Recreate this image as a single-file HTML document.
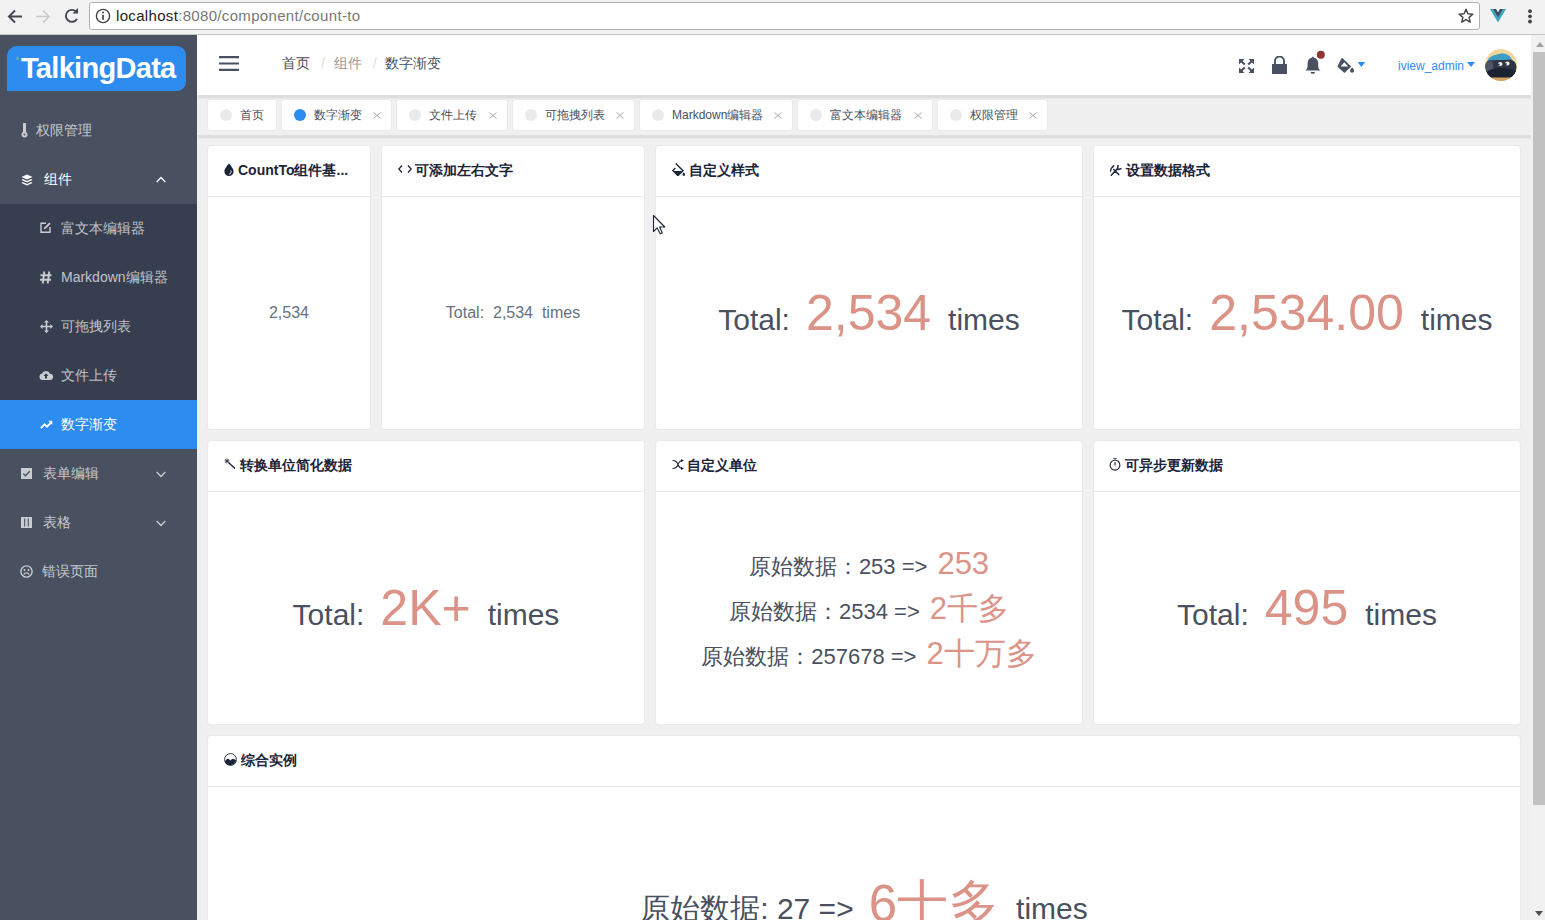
<!DOCTYPE html>
<html><head><meta charset="utf-8">
<style>
*{box-sizing:border-box;margin:0;padding:0}
html,body{width:1545px;height:920px;overflow:hidden;background:#f0f0f0;font-family:"Liberation Sans",sans-serif;}
.abs{position:absolute}
#chrome{position:absolute;left:0;top:0;width:1545px;height:35px;background:#f2f2f2;border-bottom:1px solid #c4c4c4}
#url{position:absolute;left:89px;top:2px;width:1391px;height:28px;background:#fff;border:1px solid #b0b0b0;border-radius:3px}
#urltext{position:absolute;left:116px;top:7px;font-size:15px;line-height:18px;color:#777;white-space:nowrap;letter-spacing:0.33px}
#urltext b{font-weight:normal;color:#222}
#side{position:absolute;left:0;top:35px;width:197px;height:885px;background:#495060}
#logo{position:absolute;left:7px;top:46px;width:179px;height:45px;background:#2d8cf0;border-radius:10px 9px 9px 0}
#logo span{position:absolute;left:14px;top:5px;font-size:29px;font-weight:bold;color:#fff;line-height:34px;letter-spacing:-0.7px}
.mi{position:absolute;left:0;width:197px;height:49px;color:rgba(255,255,255,.7);font-size:14px;line-height:49px;white-space:nowrap}
.mi .t{position:absolute;top:0}
.mi svg{position:absolute}
#sub{position:absolute;left:0;top:204px;width:197px;height:245px;background:#363e4f}
#header{position:absolute;left:197px;top:35px;width:1334px;height:60px;background:#fff}
#tagsbar{position:absolute;left:197px;top:95px;width:1334px;height:40px;background:#f0f0f0}
.shd{position:absolute;left:198px;width:1333px;height:4px;border-top:1px solid #e0e0e0;border-bottom:1px solid #e9e9e9;background:#dddddd}
.tag{position:absolute;top:99px;height:32px;background:#fff;border:1px solid #e9eaec;border-radius:3px;font-size:12px;line-height:28px;color:#495060;white-space:nowrap}
.tag .dot{position:absolute;left:12px;top:9px;width:12px;height:12px;border-radius:50%;background:#e9eaec}
.tag .tt{position:absolute;left:32px;top:1px}
.tag .x{position:absolute;top:12px}
.card{position:absolute;background:#fff;border:1px solid #e9eaec;border-radius:4px}
.card .hd{position:absolute;left:0;top:0;right:0;height:51px;border-bottom:1px solid #e9eaec}
.card .ttl{position:absolute;left:29px;top:14px;font-size:14px;font-weight:bold;color:#1c2438;line-height:20px;white-space:nowrap}
.card .ic{position:absolute;top:17px;left:15px}
.gray{color:#657180}
.dk{color:#495060}
.sal{color:#dc9387}
.ln{position:absolute;white-space:nowrap;left:0;right:0;text-align:center}
#sb{position:absolute;left:1531px;top:35px;width:14px;height:885px;background:#f1f1f1}
#thumb{position:absolute;left:1533px;top:52px;width:12px;height:753px;background:#c1c1c1}
</style></head>
<body>
<div id="chrome">
  <svg class="abs" style="left:7px;top:9px" width="16" height="15" viewBox="0 0 16 15"><path d="M15 7.5H2M8 1.5L2 7.5l6 6" fill="none" stroke="#454750" stroke-width="2"/></svg>
  <svg class="abs" style="left:36px;top:9px" width="15" height="15" viewBox="0 0 15 15"><path d="M0 7.5h13M7 1.5l6 6-6 6" fill="none" stroke="#c9c9cc" stroke-width="1.6"/></svg>
  <svg class="abs" style="left:63px;top:8px" width="17" height="16" viewBox="0 0 17 16"><path d="M13.6 4.2A6 6 0 1 0 14 11" fill="none" stroke="#454750" stroke-width="1.9"/><path d="M9.5 5.5h5.5V0z" fill="#454750"/></svg>
  <div id="url"></div>
  <svg class="abs" style="left:95px;top:8px" width="16" height="16" viewBox="0 0 16 16"><circle cx="8" cy="8" r="6.6" fill="none" stroke="#444" stroke-width="1.4"/><rect x="7.2" y="6.8" width="1.7" height="5" fill="#444"/><circle cx="8.05" cy="4.6" r="1" fill="#444"/></svg>
  <div id="urltext"><b>localhost</b>:8080/component/count-to</div>
  <svg class="abs" style="left:1458px;top:8px" width="16" height="16" viewBox="0 0 16 16"><path d="M8 1.2l1.9 4.6 4.9.4-3.7 3.2 1.1 4.8L8 11.6l-4.2 2.6 1.1-4.8L1.2 6.2l4.9-.4z" fill="none" stroke="#444" stroke-width="1.4" stroke-linejoin="round"/></svg>
  <svg class="abs" style="left:1490px;top:9px" width="16" height="14" viewBox="0 0 18 16" preserveAspectRatio="none"><path d="M0 0h4.5L9 8l4.5-8H18L9 15.5z" fill="#41a3c0"/><path d="M3.6 0h3.2L9 4l2.2-4h3.2L9 9.5z" fill="#3b4a5e"/></svg>
  <svg class="abs" style="left:1527px;top:8px" width="6" height="18" viewBox="0 0 6 18"><circle cx="3" cy="3.2" r="1.9" fill="#444"/><circle cx="3" cy="8.3" r="1.9" fill="#444"/><circle cx="3" cy="13.5" r="1.9" fill="#444"/></svg>
</div>

<div id="side">
</div>
<div id="sub"></div>
<div class="mi" style="top:106px"><svg style="left:21px;top:17px" width="7" height="15" viewBox="0 0 7 15"><path d="M2 1.2a1.5 1.5 0 0 1 3 0V9a3 3 0 1 1-3 0z" fill="#c9ccd1"/><circle cx="3.5" cy="11.5" r="1" fill="#495060"/></svg><span class="t" style="left:36px">权限管理</span></div>
<div class="mi" style="top:155px;color:#fff"><svg style="left:21px;top:19px" width="12" height="12" viewBox="0 0 12 12"><path d="M6 0.5L11.5 3 6 5.5 0.5 3z" fill="#fff"/><path d="M1.8 5L0.5 6 6 8.5 11.5 6 10.2 5 6 7z" fill="#fff"/><path d="M1.8 8L0.5 9 6 11.5 11.5 9 10.2 8 6 10z" fill="#fff"/></svg><span class="t" style="left:44px">组件</span><svg style="left:156px;top:21px" width="10" height="7" viewBox="0 0 10 7"><path d="M0.7 6L5 1.5 9.3 6" fill="none" stroke="#fff" stroke-width="1.3"/></svg></div>
<div class="mi" style="top:204px"><svg style="left:40px;top:18px" width="11" height="11" viewBox="0 0 11 11"><path d="M6 1.2H1v9h9V5" fill="none" stroke="#c9ccd1" stroke-width="1.4"/><path d="M9.3 0.4l1.3 1.3-5 5-1.8.5.5-1.8z" fill="#c9ccd1"/></svg><span class="t" style="left:61px">富文本编辑器</span></div>
<div class="mi" style="top:253px"><svg style="left:40px;top:18px" width="12" height="13" viewBox="0 0 12 13"><path d="M4.3 0.5L2.7 12.5M9.3 0.5L7.7 12.5M0.5 4.3h11M0 8.7h11" fill="none" stroke="#c9ccd1" stroke-width="1.9"/></svg><span class="t" style="left:61px">Markdown编辑器</span></div>
<div class="mi" style="top:302px"><svg style="left:40px;top:18px" width="13" height="13" viewBox="0 0 13 13"><path d="M6.5 1.5v10M1.5 6.5h10" stroke="#c9ccd1" stroke-width="1.6"/><path d="M6.5 0L9 2.6H4zM6.5 13L9 10.4H4zM0 6.5L2.6 4v5zM13 6.5L10.4 4v5z" fill="#c9ccd1"/></svg><span class="t" style="left:61px">可拖拽列表</span></div>
<div class="mi" style="top:351px"><svg style="left:39px;top:19px" width="14" height="10" viewBox="0 0 14 10"><path d="M3.5 10A3.3 3.3 0 0 1 3 3.5 4.3 4.3 0 0 1 11 3.8 3.1 3.1 0 0 1 11 10z" fill="#c9ccd1"/><path d="M7 3.3L9.6 6H8v2.5H6V6H4.4z" fill="#363e4f"/></svg><span class="t" style="left:61px">文件上传</span></div>
<div class="mi" style="top:400px;background:#2d8cf0;color:#fff"><svg style="left:40px;top:20px" width="13" height="9" viewBox="0 0 13 9"><path d="M0.8 8.2L4.6 4.3 7 6.7 11 2.6" fill="none" stroke="#fff" stroke-width="1.8"/><path d="M8.3 0.8h4v4z" fill="#fff"/></svg><span class="t" style="left:61px">数字渐变</span></div>
<div class="mi" style="top:449px"><svg style="left:21px;top:19px" width="11" height="11" viewBox="0 0 11 11"><rect width="11" height="11" fill="#c9ccd1"/><path d="M2.2 5.6l2.2 2.2 4.4-4.6" fill="none" stroke="#495060" stroke-width="1.3"/></svg><span class="t" style="left:43px">表单编辑</span><svg style="left:156px;top:22px" width="10" height="7" viewBox="0 0 10 7"><path d="M0.7 1L5 5.5 9.3 1" fill="none" stroke="#c9ccd1" stroke-width="1.3"/></svg></div>
<div class="mi" style="top:498px"><svg style="left:21px;top:19px" width="11" height="11" viewBox="0 0 11 11"><rect width="11" height="11" fill="#c9ccd1"/><path d="M3.7 1.5v8M7.3 1.5v8" stroke="#495060" stroke-width="1.1"/></svg><span class="t" style="left:43px">表格</span><svg style="left:156px;top:22px" width="10" height="7" viewBox="0 0 10 7"><path d="M0.7 1L5 5.5 9.3 1" fill="none" stroke="#c9ccd1" stroke-width="1.3"/></svg></div>
<div class="mi" style="top:547px"><svg style="left:20px;top:18px" width="13" height="13" viewBox="0 0 13 13"><circle cx="6.5" cy="6.5" r="5.6" fill="none" stroke="#c9ccd1" stroke-width="1.4"/><circle cx="4.5" cy="5" r="1" fill="#c9ccd1"/><circle cx="8.5" cy="5" r="1" fill="#c9ccd1"/><path d="M3.8 9.6a3 3 0 0 1 5.4 0" fill="none" stroke="#c9ccd1" stroke-width="1.2"/></svg><span class="t" style="left:42px">错误页面</span></div>
<div id="logo"><span>TalkingData</span><i style="position:absolute;left:9px;top:11px;width:3px;height:3px;background:#5aa7b8"></i></div>

<div id="header"></div>
<svg class="abs" style="left:219px;top:56px" width="20" height="15" viewBox="0 0 20 15"><path d="M0 1.2h20M0 7.5h20M0 13.8h20" stroke="#495060" stroke-width="2.2"/></svg>
<div class="abs" style="left:282px;top:53px;font-size:14px;line-height:20px;white-space:nowrap;color:#495060"><span style="color:#495060">首页</span><span style="position:absolute;left:39px;color:#dddee1">/</span><span style="position:absolute;left:52px;color:#999">组件</span><span style="position:absolute;left:91px;color:#dddee1">/</span><span style="position:absolute;left:103px;font-weight:500;color:#495060">数字渐变</span></div>
<svg class="abs" style="left:1239px;top:59px" width="15" height="14" viewBox="0 0 15 14"><g fill="#495060"><path d="M0 0h5.5L0 5.5z"/><path d="M15 0v5.5L9.5 0z"/><path d="M0 14v-5.5L5.5 14z"/><path d="M15 14h-5.5L15 8.5z"/></g><path d="M2 2l3.8 3.6M13 2L9.2 5.6M2 12l3.8-3.6M13 12L9.2 8.4" stroke="#495060" stroke-width="2"/></svg>
<svg class="abs" style="left:1271px;top:56px" width="17" height="19" viewBox="0 0 17 19"><path d="M4 8.5V5a4.5 4.5 0 0 1 9 0v3.5" fill="none" stroke="#495060" stroke-width="1.9"/><rect x="1" y="8" width="15" height="10" fill="#495060"/></svg>
<svg class="abs" style="left:1300px;top:48px" width="70" height="30" viewBox="0 0 70 30"><path d="M12.8 8.6c.5 0 .8.4.8.9 3 .6 4.6 2.8 4.6 5.8v2.2c0 2.6.8 4.2 2.4 5.1H5.2c1.6-.9 2.4-2.5 2.4-5.1v-2.2c0-3 1.6-5.2 4.6-5.8 0-.5.3-.9.6-.9z" fill="#495060"/><path d="M10.6 23.9h4.4a2.2 1.9 0 0 1-4.4 0z" fill="#495060"/><circle cx="20.8" cy="6.8" r="4" fill="#8d3632"/><path d="M41.3 10.6L42.4 10 51.2 18.6 44.4 25 37.4 18.6z" fill="#495060"/><path d="M40.6 18.6L44.3 14.2 48.1 18.6z" fill="#fff"/><path d="M52.1 19.2c.9 1.3 2 2.4 2 3.5a2 2 0 0 1-4 0c0-1.1 1.1-2.2 2-3.5z" fill="#495060"/><path d="M57.7 14h7.5L61.45 19z" fill="#2d8cf0"/></svg>
<div class="abs" style="left:1398px;top:58px;font-size:12px;line-height:16px;color:#2d8cf0;white-space:nowrap">iview_admin</div>
<svg class="abs" style="left:1467px;top:62px" width="8" height="5" viewBox="0 0 8 5"><path d="M0 0h8L4 5z" fill="#2d8cf0"/></svg>
<svg class="abs" style="left:1481px;top:45px" width="40" height="40" viewBox="0 0 40 40"><defs><clipPath id="av"><circle cx="20" cy="20" r="16"/></clipPath></defs><g clip-path="url(#av)"><rect width="40" height="40" fill="#f1d69c"/><path d="M6 17L8 13 12 10.5 16 9.5 21 8.3 25 9 28.5 11 31 14.5 32 17 20 18z" fill="#3d9dc2"/><path d="M4.5 19Q6 15 10 15.2L30 14.8Q35 16 35.5 22L35 30Q28 33.5 20 33.5Q11 33.5 5 30Q3.5 24 4.5 19z" fill="#2e3545"/><path d="M5 18Q7 16 11 16L13 24 6 28Q4 23 5 18z" fill="#4d5666"/><path d="M5.5 27Q12 22.5 20 23Q28 22.5 35 26L35 31Q27 34 20 34Q11 34 5.5 31z" fill="#1b2232"/><ellipse cx="19.2" cy="19" rx="2.3" ry="2" fill="#eeeeee"/><ellipse cx="26.3" cy="18.6" rx="2.3" ry="2" fill="#eeeeee"/><circle cx="17.8" cy="19.3" r="0.9" fill="#222"/><circle cx="24.9" cy="19" r="0.9" fill="#222"/><path d="M9 32.5L31 32.5 30 36Q20 38 10 36z" fill="#d6a35f"/></g></svg>
<div id="tagsbar"></div>
<div class="shd" style="top:95px"></div>
<div class="shd" style="top:135px"></div>
<div class="tag" style="left:207px;width:70px"><span class="dot"></span><span class="tt">首页</span></div>
<div class="tag" style="left:281px;width:111px"><span class="dot" style="background:#2d8cf0"></span><span class="tt">数字渐变</span><svg class="x" style="left:91px" width="8" height="7" viewBox="0 0 8 7"><path d="M0.5 0.5l7 6M7.5 0.5l-7 6" stroke="#a3a8b0" stroke-width="1"/></svg></div>
<div class="tag" style="left:396px;width:112px"><span class="dot"></span><span class="tt">文件上传</span><svg class="x" style="left:92px" width="8" height="7" viewBox="0 0 8 7"><path d="M0.5 0.5l7 6M7.5 0.5l-7 6" stroke="#a3a8b0" stroke-width="1"/></svg></div>
<div class="tag" style="left:512px;width:123px"><span class="dot"></span><span class="tt">可拖拽列表</span><svg class="x" style="left:103px" width="8" height="7" viewBox="0 0 8 7"><path d="M0.5 0.5l7 6M7.5 0.5l-7 6" stroke="#a3a8b0" stroke-width="1"/></svg></div>
<div class="tag" style="left:639px;width:154px"><span class="dot"></span><span class="tt">Markdown编辑器</span><svg class="x" style="left:134px" width="8" height="7" viewBox="0 0 8 7"><path d="M0.5 0.5l7 6M7.5 0.5l-7 6" stroke="#a3a8b0" stroke-width="1"/></svg></div>
<div class="tag" style="left:797px;width:136px"><span class="dot"></span><span class="tt">富文本编辑器</span><svg class="x" style="left:116px" width="8" height="7" viewBox="0 0 8 7"><path d="M0.5 0.5l7 6M7.5 0.5l-7 6" stroke="#a3a8b0" stroke-width="1"/></svg></div>
<div class="tag" style="left:937px;width:111px"><span class="dot"></span><span class="tt">权限管理</span><svg class="x" style="left:91px" width="8" height="7" viewBox="0 0 8 7"><path d="M0.5 0.5l7 6M7.5 0.5l-7 6" stroke="#a3a8b0" stroke-width="1"/></svg></div>


<div class="card" style="left:207px;top:145px;width:164px;height:285px"><div class="hd"></div>
<svg class="ic" style="left:16px;top:17px" width="10" height="13" viewBox="0 0 10 13"><path d="M5 0.3C6.5 2.6 9.6 5.7 9.6 8.4A4.6 4.6 0 0 1 0.4 8.4C0.4 5.7 3.5 2.6 5 0.3z" fill="#1c2438"/><path d="M6.8 7.4c.8 1.6.1 3.4-1.6 3.8" fill="none" stroke="#fff" stroke-width=".9"/></svg>
<div class="ttl" style="left:30px">CountTo组件基...</div>
<div class="ln gray" style="top:157px;font-size:16px;line-height:20px">2,534</div>
</div>

<div class="card" style="left:381px;top:145px;width:264px;height:285px"><div class="hd"></div>
<svg class="ic" style="left:16px;top:19px" width="14" height="8" viewBox="0 0 14 8"><path d="M4 0.5L0.8 4 4 7.5M10 0.5L13.2 4 10 7.5" fill="none" stroke="#1c2438" stroke-width="1.3"/></svg>
<div class="ttl" style="left:33px">可添加左右文字</div>
<div class="ln gray" style="top:157px;font-size:16px;line-height:20px">Total:&nbsp; 2,534 &nbsp;times</div>
</div>

<div class="card" style="left:655px;top:145px;width:428px;height:285px"><div class="hd"></div>
<svg class="ic" style="left:16px;top:17px" width="14" height="13" viewBox="0 0 14 13"><path d="M3.8 0.6L11 7.8 5.9 12.6 0.8 7.6 3.4 5" fill="none" stroke="#1c2438" stroke-width="1.4"/><path d="M1.6 8h8.8L5.9 12.4z" fill="#1c2438"/><path d="M11.8 9.2c.8 1 1.3 1.8 1.3 2.4a1.3 1.3 0 0 1-2.6 0c0-.6.5-1.4 1.3-2.4z" fill="#1c2438"/></svg>
<div class="ttl" style="left:33px">自定义样式</div>
<div class="ln dk" style="top:142px;font-size:30px;line-height:50px"><span>Total:</span><span class="sal" style="font-size:50px;margin-left:16px">2,534</span><span style="margin-left:17px">times</span></div>
</div>

<div class="card" style="left:1093px;top:145px;width:428px;height:285px"><div class="hd"></div>
<svg class="ic" style="left:16px;top:19px" width="12" height="11" viewBox="0 0 12 11"><path d="M1.3 10.2L7.6 3.6M8.1 0.4Q7.4 3 7.6 4.4Q9.2 4.3 10.9 3.7M8.7 9.6L3.8 4.6M0.4 6Q1.2 2.6 3.6 0.8" fill="none" stroke="#1c2438" stroke-width="1.5" stroke-linecap="round"/></svg>
<div class="ttl" style="left:32px">设置数据格式</div>
<div class="ln dk" style="top:142px;font-size:30px;line-height:50px"><span>Total:</span><span class="sal" style="font-size:50px;margin-left:16px">2,534.00</span><span style="margin-left:17px">times</span></div>
</div>

<div class="card" style="left:207px;top:440px;width:438px;height:285px"><div class="hd"></div>
<svg class="ic" style="left:16px;top:17px" width="12" height="11" viewBox="0 0 12 11"><path d="M4.5 4.5L11 10.5" stroke="#1c2438" stroke-width="1.4"/><path d="M3 0.5v5M0.5 3h5M1.2 1.2l3.6 3.6M4.8 1.2L1.2 4.8" stroke="#1c2438" stroke-width=".8"/></svg>
<div class="ttl" style="left:32px">转换单位简化数据</div>
<div class="ln dk" style="top:142px;font-size:30px;line-height:50px"><span>Total:</span><span class="sal" style="font-size:50px;margin-left:16px">2K+</span><span style="margin-left:17px">times</span></div>
</div>

<div class="card" style="left:655px;top:440px;width:428px;height:285px"><div class="hd"></div>
<svg class="ic" style="left:16px;top:18px" width="12" height="11" viewBox="0 0 12 11"><path d="M0.5 1.5c3 0 4.5 1 5.5 4s2.5 4 5 4M0.5 9.5c3 0 4.5-1 5.5-4s2.5-4 5-4" fill="none" stroke="#1c2438" stroke-width="1.1"/><path d="M9 0L12 1.5 9 3zM9 8L12 9.5 9 11z" fill="#1c2438"/></svg>
<div class="ttl" style="left:31px">自定义单位</div>
<div class="ln dk" style="top:100px;font-size:22px;line-height:45px">原始数据：253 =&gt;<span class="sal" style="font-size:31px;margin-left:10px">253</span></div>
<div class="ln dk" style="top:145px;font-size:22px;line-height:45px">原始数据：2534 =&gt;<span class="sal" style="font-size:31px;margin-left:10px">2千多</span></div>
<div class="ln dk" style="top:190px;font-size:22px;line-height:45px">原始数据：257678 =&gt;<span class="sal" style="font-size:31px;margin-left:10px">2十万多</span></div>
</div>

<div class="card" style="left:1093px;top:440px;width:428px;height:285px"><div class="hd"></div>
<svg class="ic" style="left:15px;top:17px" width="12" height="13" viewBox="0 0 12 13"><circle cx="6" cy="7.2" r="4.9" fill="none" stroke="#1c2438" stroke-width="1.1"/><path d="M6 4v3.5M4.3 0.8h3.4M10 2.8l-.9.9" stroke="#1c2438" stroke-width="1.1"/></svg>
<div class="ttl" style="left:31px">可异步更新数据</div>
<div class="ln dk" style="top:142px;font-size:30px;line-height:50px"><span>Total:</span><span class="sal" style="font-size:50px;margin-left:16px">495</span><span style="margin-left:17px">times</span></div>
</div>

<div class="card" style="left:207px;top:735px;width:1314px;height:302px"><div class="hd"></div>
<svg class="ic" style="left:16px;top:17px" width="13" height="13" viewBox="0 0 13 13"><circle cx="6.5" cy="6.5" r="5.9" fill="none" stroke="#1c2438" stroke-width=".9"/><path d="M0.8 8.6Q2.5 5.2 4.8 5.9Q5.8 6.4 6.6 7.6Q7.6 5.6 9.5 5.9Q11 6.2 12.1 7A5.9 5.9 0 0 1 0.8 8.6Z" fill="#1c2438"/></svg>
<div class="ttl" style="left:33px">综合实例</div>
<div class="ln dk" style="top:141px;font-size:30px;line-height:50px">原始数据: 27 =&gt;<span class="sal" style="font-size:51px;margin-left:15px;position:relative;top:2px">6十多</span><span style="margin-left:17px">times</span></div>
</div>
<svg class="abs" style="left:652px;top:214px" width="14" height="21" viewBox="0 0 14 21"><path d="M1.5 1.5V17.5L5.2 13.9 8.2 19.8 10.3 18.9 7.6 13H12.8Z" fill="#fff" stroke="#1c2438" stroke-width="1.1" stroke-linejoin="round"/></svg>
<div id="sb"></div>
<div id="thumb"></div>
<svg class="abs" style="left:1536px;top:42px" width="8" height="5" viewBox="0 0 8 5"><path d="M0 5h8L4 0z" fill="#a3a3a3"/></svg>
<svg class="abs" style="left:1535px;top:911px" width="8" height="5" viewBox="0 0 8 5"><path d="M0 0h8L4 5z" fill="#505050"/></svg>
</body></html>
